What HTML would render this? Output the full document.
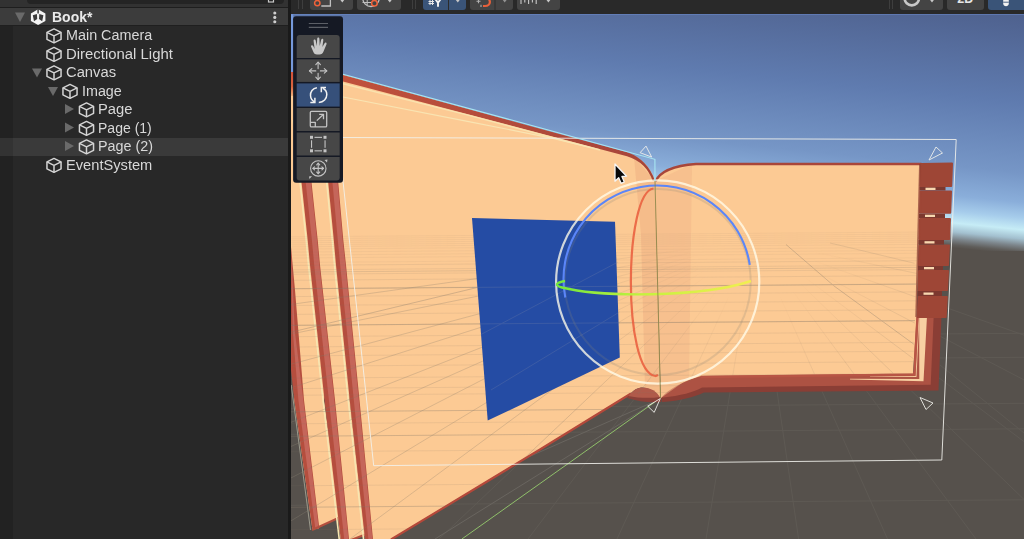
<!DOCTYPE html>
<html>
<head>
<meta charset="utf-8">
<title>Unity - Book</title>
<style>
html,body{margin:0;padding:0;background:#282828;}
body{width:1024px;height:539px;overflow:hidden;position:relative;font-family:"Liberation Sans",sans-serif;}
#hier{position:absolute;left:0;top:0;width:288px;height:539px;background:#282828;overflow:hidden;}
#hier .strip{position:absolute;left:0;top:26px;width:13px;height:513px;background:#222222;}
#hier .topbar{position:absolute;left:0;top:0;width:288px;height:8px;background:#323232;}
#hier .search{position:absolute;left:27px;top:-10px;width:257px;height:13.5px;background:#242424;border-radius:4px;}
#hier .head{position:absolute;left:0;top:7px;width:288px;height:17px;background:#3c3c3c;border-top:1px solid #1e1e1e;border-bottom:1px solid #1f1f1f;box-sizing:content-box;}
#hier .sel{position:absolute;left:0;top:138px;width:288px;height:18px;background:#3a3a3a;}
#hier .sel2{position:absolute;left:0;top:138px;width:13px;height:18px;background:#333333;}
.row{position:absolute;height:18px;line-height:18px;color:#d8d8d8;font-size:13.8px;white-space:nowrap;transform-origin:0 50%;}
.row.b{font-weight:bold;color:#eaeaea;}
svg{position:absolute;left:0;top:0;}
#divider{position:absolute;left:288px;top:0;width:3px;height:539px;background:#1a1a1a;}
#toolbar{position:absolute;left:291px;top:0;width:733px;height:14px;background:#292929;}
.tb{position:absolute;top:-6px;height:16px;background:#444444;border-radius:3px;}
.tb.blue{background:#3a5478;}
.sep{position:absolute;top:0;width:1px;height:9px;background:#3e3e3e;}
</style>
</head>
<body>
<div id="hier">
  <div class="topbar"></div>
  <div class="search"></div>
  <div class="head"></div>
  <div class="strip"></div>
  <div class="sel"></div><div class="sel2"></div>
  <div class="row b" id="t0" style="left:51.5px;top:9px;transform:scaleX(1.013);">Book*</div>
  <div class="row" id="t1" style="left:65.7px;top:27px;transform:scaleX(1.041);">Main Camera</div>
  <div class="row" id="t2" style="left:65.7px;top:45.5px;transform:scaleX(1.08);">Directional Light</div>
  <div class="row" id="t3" style="left:65.7px;top:64px;transform:scaleX(1.07);">Canvas</div>
  <div class="row" id="t4" style="left:81.8px;top:82.5px;transform:scaleX(1.038);">Image</div>
  <div class="row" id="t5" style="left:98.3px;top:101px;transform:scaleX(1.07);">Page</div>
  <div class="row" id="t6" style="left:98.3px;top:119.5px;transform:scaleX(1.016);">Page (1)</div>
  <div class="row" id="t7" style="left:98.3px;top:138px;transform:scaleX(1.041);">Page (2)</div>
  <div class="row" id="t8" style="left:65.7px;top:156.5px;transform:scaleX(1.062);">EventSystem</div>
</div>
<div id="divider"></div>
<div id="toolbar">
  <div class="sep" style="left:7px"></div><div class="sep" style="left:10.5px"></div>
  <div class="tb" style="left:18.5px;width:43.5px"></div>
  <div class="tb" style="left:65.5px;width:44.5px"></div>
  <div class="sep" style="left:120.5px"></div><div class="sep" style="left:124px"></div>
  <div class="tb blue" style="left:132px;width:42.5px"></div>
  <div class="tb" style="left:179px;width:42.5px"></div>
  <div class="tb" style="left:225.5px;width:43px"></div>
  <div class="sep" style="left:598px"></div><div class="sep" style="left:601px"></div>
  <div class="tb" style="left:608.5px;width:43.5px"></div>
  <div class="tb" style="left:656px;width:36.5px"></div>
  <div class="tb blue" style="left:696.5px;width:40px"></div>
</div>
<svg id="scene" width="1024" height="539" viewBox="0 0 1024 539">
<defs>
<linearGradient id="sky" x1="994" y1="14" x2="970.300" y2="249.600" gradientUnits="userSpaceOnUse">
<stop offset="0" stop-color="#4f628f"/>
<stop offset="0.36" stop-color="#5f7baf"/>
<stop offset="0.655" stop-color="#7696c6"/>
<stop offset="0.78" stop-color="#8aaeda"/>
<stop offset="0.845" stop-color="#a6cceb"/>
<stop offset="0.895" stop-color="#c6ecf6"/>
<stop offset="0.933" stop-color="#a3c0cf"/>
<stop offset="0.962" stop-color="#7d868c"/>
<stop offset="0.987" stop-color="#5f5d5a"/>
<stop offset="1" stop-color="#56514c"/>
</linearGradient>
<linearGradient id="ygrad" x1="556" y1="0" x2="751" y2="0" gradientUnits="userSpaceOnUse">
<stop offset="0" stop-color="#6fe63c"/>
<stop offset="0.45" stop-color="#c6f23e"/>
<stop offset="1" stop-color="#f2ee52"/>
</linearGradient>
<clipPath id="clipscene"><rect x="291" y="14" width="733" height="525"/></clipPath>
<clipPath id="clippages"><path d="M291,60 L540,129 L628,153 Q648,160 655,181 L660.500,398.500 L631,393 L391,539 L291,539 Z M655,181 Q662,166 696,163.500 L921,163.500 L913,373 L701,376 L661,398 Z"/></clipPath>
<linearGradient id="topred" x1="343" y1="0" x2="655" y2="0" gradientUnits="userSpaceOnUse"><stop offset="0" stop-color="#c0513c"/><stop offset="0.6" stop-color="#b04a3b"/><stop offset="1" stop-color="#a6453a"/></linearGradient>
<radialGradient id="fadeg" cx="755" cy="240" r="330" gradientUnits="userSpaceOnUse"><stop offset="0" stop-color="#000"/><stop offset="0.18" stop-color="#000"/><stop offset="0.75" stop-color="#fff"/><stop offset="1" stop-color="#fff"/></radialGradient>
<mask id="fade" maskUnits="userSpaceOnUse" x="291" y="14" width="733" height="525"><rect x="291" y="14" width="733" height="525" fill="url(#fadeg)"/></mask>
<linearGradient id="stripred" x1="0" y1="72" x2="0" y2="96" gradientUnits="userSpaceOnUse"><stop offset="0" stop-color="#d2503a"/><stop offset="0.6" stop-color="#d8643f"/><stop offset="1" stop-color="#f0b07c"/></linearGradient>
</defs>
<g clip-path="url(#clipscene)">
<rect x="291" y="14" width="733" height="238" fill="url(#sky)"/>
<rect x="291" y="251" width="733" height="288" fill="#56514c"/>
<!-- ground grid -->
<g stroke="#6a665f" stroke-width="1" fill="none" opacity="0.4">
<path d="M291,408.8 L1024,403.3"/>
<path d="M291,434.3 L1024,428.8"/>
<path d="M291,505.3 L1024,499.8"/>
<path d="M291,362.8 L1024,357.3"/>
<path d="M291,338.8 L1024,333.3"/>
<path d="M745.2,300.0 L706.0,539"/>
<path d="M763.7,300.0 L798.6,539"/>
<path d="M781.6,300.0 L887.5,539"/>
<path d="M799.3,300.0 L976.0,539"/>
<path d="M817.2,300.0 L1065.0,539"/>
<path d="M835.1,300.0 L1154.0,539"/>
<path d="M870.4,300.0 L1330.0,539"/>
<path d="M924.6,300.0 L1600.0,539"/>
<path d="M727.3,300.0 L617.0,539"/>
<path d="M709.4,300.0 L528.0,539"/>
<path d="M691.6,300.0 L439.0,539"/>
<path d="M673.7,300.0 L350.0,539"/>
<path d="M655.9,300.0 L261.0,539"/>
<path d="M638.0,300.0 L172.0,539"/>
<path d="M620.2,300.0 L83.0,539"/>
<path d="M602.3,300.0 L-6.0,539"/>
<path d="M566.6,300.0 L-184.0,539"/>
<path d="M530.9,300.0 L-362.0,539"/>
<path d="M459.0,300.0 L-720.0,539"/>
<path d="M940,365 L1024,433"/><path d="M660,399 L435,539" stroke="#85827b"/><path d="M660,399 L517,462" stroke="#85827b"/>
</g>
<path d="M461.900,539 L659.500,398.700" stroke="#8fbf6a" stroke-width="1" fill="none"/>

<!-- right side: cover, layers -->
<path d="M661,398 C666,390 684,381 701,375.500 L916,372 L916,316 L941.500,316 L938.500,390.600 L704,392.500 C694,397 680,401 662,402 Z" fill="#8a3e35"/>
<path d="M661,397 C666,390 684,381 701,375.500 L914,372 L914,316 L933.700,316 L930.700,384.800 L702,387.500 C694,392 680,396 663,397.500 Z" fill="#ad5243"/>
<path d="M919.200,316 L927,316 L923.500,381.300 L850,379.400 L850,378.700 L919.300,379 Z" fill="#f8d0a2"/>
<path d="M918.400,316 L919.500,316 L916.500,377 L870,376.500 L870,376 L915.400,376 Z" fill="#f3c69a"/>
<!-- right page -->
<path d="M655,181 Q662,166 696,163.500 L921,163.500 L916.500,318 L913,373.500 L701,376 C684,381 668,389 661,398 Z" fill="#fcca94"/>
<path d="M655,181 L692,164 L689,378 L661,398 Z" fill="#f2b888" opacity="0.55"/>
<path d="M655.500,181.500 Q662,166.500 696,164 L921.500,164" fill="none" stroke="#a8463a" stroke-width="2.500"/>
<path d="M917.500,317 L914.400,374.600 L701,377" fill="none" stroke="#b85545" stroke-width="2.400"/>
<!-- tabs -->
<g fill="#9e4636" stroke="#9e4636" stroke-width="2" stroke-linejoin="round">
<path d="M921,164 L952,163.500 L951.200,186 L920.500,186 Z"/>
<path d="M920.500,191.500 L951,191.500 L950.200,212.700 L920,212.700 Z"/>
<path d="M920,219 L950,219 L949.200,239 L919.500,239 Z"/>
<path d="M919.500,245.500 L949,245.500 L948,265 L919,265 Z"/>
<path d="M919,271 L948,271 L947,290 L918.500,290 Z"/>
<path d="M918.500,297 L946.800,297 L945.700,317 L917.700,317 Z"/>
</g>
<g fill="#7c382f">
<rect x="919.500" y="187" width="26" height="3.500"/><rect x="919" y="213.700" width="26" height="4.300"/><rect x="918.500" y="240" width="25.500" height="4.500"/><rect x="918" y="266" width="25" height="4"/><rect x="917.500" y="291" width="24.500" height="5"/>
</g>
<g fill="#f8d8b0">
<rect x="925.500" y="187.700" width="10" height="2.300"/><rect x="925" y="214.700" width="10" height="2.300"/><rect x="924.500" y="241.200" width="10" height="2.300"/><rect x="924" y="267" width="10" height="2.300"/><rect x="923.500" y="292.500" width="10" height="2.300"/>
</g>
<path d="M919.800,164 L916,317" stroke="#8a3c30" stroke-width="1.500" fill="none" opacity="0.7"/>

<!-- left pages -->
<!-- page 0 (far left) -->
<path d="M291,90 L343,90 L343,183 L324,400 L340,517 L312.500,530 L294.300,400 L291,340 Z" fill="#fcca94"/>
<path d="M291.0,247.0 L291.0,370.0 L294.3,400.0 L312.5,530.0 L319.3,528.0 L304.0,400.0 L295.0,290.0 L291.0,247.0 Z" fill="#b54e3e"/><path d="M291.0,247.0 L292.7,330.0 L298.4,400.0 L315.4,529.0 L318.8,529.0 L303.3,400.0 L294.7,330.0 L291.0,247.0 Z" fill="#c5665a"/><path d="M291.2,385 L293.200,400 L310.500,530" stroke="#b9b9a8" stroke-width="1" fill="none" opacity="0.7"/>
<path d="M312,530 L339.500,517.500" stroke="#b4503f" stroke-width="2.200" fill="none"/>
<!-- page 1 -->
<path d="M295,90 L343,90 L343,183 L349.700,400 L365,535.500 L341,543.500 L325,400 L310,265 L302,183 Z" fill="#fcca94"/>
<path d="M294.8,120.0 L301.6,183.0 L307.7,240.0 L310.0,265.0 L324.5,400.0 L340.7,539.0 L349.0,539.0 L335.0,400.0 L320.0,265.0 L317.7,240.0 L311.6,183.0 L304.8,120.0 Z" fill="#b54e3e"/><path d="M299.0,120.0 L305.8,183.0 L311.9,240.0 L314.2,265.0 L328.9,400.0 L344.2,539.0 L348.4,539.0 L334.3,400.0 L319.3,265.0 L317.0,240.0 L310.9,183.0 L304.1,120.0 Z" fill="#c5665a"/><path d="M293.3,120.0 L300.1,183.0 L306.2,240.0 L308.5,265.0 L323.0,400.0 L339.2,539.0" stroke="#f7e6b2" stroke-width="1.600" fill="none"/>

<path d="M345,542.300 L366,534.300" stroke="#b4503f" stroke-width="2.200" fill="none"/>
<!-- main page -->
<path d="M291,72 L293.800,72 L293.800,61.500 L343,75 L540,129 L628,153 Q648,160 655,181 L660.500,398.500 C656,391 648,387 641,387.500 C637,388 634,390 631,393 L540,449 L391,539 L365,539 L349.700,400 L336,265 L328.500,183 L322,110 Z" fill="#fcca94"/>
<path d="M634,157 L655,181 L660.500,398 L645,388 L641,235 Z" fill="#f0b384" opacity="0.6"/>
<!-- main page left border -->
<path d="M322.2,120.0 L328.3,183.0 L333.8,240.0 L336.0,265.0 L349.7,400.0 L365.0,539.0 L373.0,539.0 L359.5,400.0 L346.0,265.0 L343.3,240.0 L338.3,183.0 L332.2,120.0 Z" fill="#b54e3e"/><path d="M326.4,120.0 L332.5,183.0 L337.8,240.0 L340.2,265.0 L353.8,400.0 L368.4,539.0 L372.4,539.0 L358.8,400.0 L345.3,265.0 L342.6,240.0 L337.6,183.0 L331.5,120.0 Z" fill="#c5665a"/><path d="M320.7,120.0 L326.8,183.0 L332.3,240.0 L334.5,265.0 L348.2,400.0 L363.5,539.0" stroke="#f7e6b2" stroke-width="1.600" fill="none"/>

<!-- main page top border -->
<path d="M291,72 L294,72 L294,96 L291,96 Z" fill="url(#stripred)"/>
<path d="M343,75 L540,128.700 L628,152.500 Q648,160 655,181 L652.600,181 Q646.500,162.500 627,156.300 L540,133.200 L343,81.500 Z" fill="url(#topred)"/>
<path d="M343,83.800 L470,115.600 L540,134.300 L600,150" stroke="#f9e2ae" stroke-width="1.400" fill="none"/>
<path d="M343,97 L470,121.800 L553,138.300 L590,147.500" stroke="#f9e4b2" stroke-width="1.200" fill="none"/>
<!-- main page bottom border -->
<path d="M391,539.500 L540,449.500 L631,393.500" stroke="#b4483a" stroke-width="2.200" fill="none"/>
<!-- spine lobes -->
<path d="M631,393 C634,390 637,388 641,387.500 C650,387 657,391 660.500,398.500 C650,402 638,400 628,397 Z" fill="#b05a4a"/>
<path d="M628,396 C638,398 650,398.500 660.500,397 L661,402 C650,403 638,401.500 627,398 Z" fill="#8a4038"/>



<!-- grid overlay on pages -->
<g clip-path="url(#clippages)" stroke="#85796a" fill="none">
<g stroke-width="1" opacity="0.34">
<path d="M291,288.8 L1024,283.3"/>
<path d="M291,325.3 L1024,319.8"/>
<path d="M291,411.8 L1024,406.3"/>
<path d="M291,436.3 L1024,430.8"/>
<path d="M291,507.3 L1024,501.8"/>
<g opacity="0.6"><path d="M291,272.1 L1024,266.6"/></g>
<path d="M291,332.2 L476,287.8 L565,266.4"/>
<path d="M786,244.5 L800,256.6 L833.8,285.8 L913.3,343.8 L950,372"/>
<path d="M830,243 L854,248.7 L914.6,263.3" opacity="0.5"/>
</g>
<g stroke-width="0.900" opacity="0.3" mask="url(#fade)">
<path d="M775.3,285.7 L887.5,539"/>
<path d="M784.7,280.2 L976.0,539"/>
<path d="M791.0,274.7 L1065.0,539"/>
<path d="M795.0,270.0 L1154.0,539"/>
<path d="M799.4,263.1 L1330.0,539"/>
<path d="M802.1,256.7 L1600.0,539"/>
<path d="M804.0,250.1 L2200.0,539"/>
<path d="M746.9,289.3 L706.0,539"/>
<path d="M734.0,285.4 L617.0,539"/>
<path d="M724.8,279.8 L528.0,539"/>
<path d="M718.7,274.4 L439.0,539"/>
<path d="M714.8,269.7 L350.0,539"/>
<path d="M712.2,265.9 L261.0,539"/>
<path d="M710.5,262.8 L172.0,539"/>
<path d="M709.3,260.3 L83.0,539"/>
<path d="M708.5,258.3 L-6.0,539"/>
<path d="M707.4,255.2 L-184.0,539"/>
<path d="M706.7,252.9 L-362.0,539"/>
<path d="M706.0,249.9 L-720.0,539"/>
<path d="M705.5,246.9 L-1400.0,539"/>
</g>
<g stroke-width="0.800" opacity="0.16">
<g opacity="0.55"><path d="M291,236.8 L1024,231.3"/>
<path d="M291,238.8 L1024,233.3"/>
<path d="M291,240.8 L1024,235.3"/>
<path d="M291,242.8 L1024,237.3"/>
<path d="M291,244.8 L1024,239.3"/>
<path d="M291,246.8 L1024,241.3"/>
<path d="M291,249.1 L1024,243.6"/>
<path d="M291,252.1 L1024,246.6"/>
<path d="M291,255.1 L1024,249.6"/>
<path d="M291,258.0 L1024,252.5"/>
<path d="M291,262.5 L1024,257.0"/></g>
<path d="M291,265.4 L1024,259.9"/>
<path d="M291,269.9 L1024,264.4"/>
<path d="M291,274.3 L1024,268.8"/>
<path d="M291,280.3 L1024,274.8"/>
<path d="M291,288.6 L1024,283.1"/>
<path d="M291,296.6 L1024,291.1"/>
<path d="M291,305.5 L1024,300.0"/>
<path d="M291,314.4 L1024,308.9"/>
<path d="M291,325.4 L1024,319.9"/>
<path d="M291,336.7 L1024,331.2"/>
<path d="M291,347.0 L1024,341.5"/>
<path d="M291,355.9 L1024,350.4"/>
<path d="M291,366.3 L1024,360.8"/>
<path d="M291,378.2 L1024,372.7"/>
<path d="M291,388.6 L1024,383.1"/>
<path d="M291,395.3 L1024,389.8"/>
<path d="M291,423.8 L1024,418.3"/>
<path d="M291,451.8 L1024,446.3"/>
<path d="M291,485.8 L1024,480.3"/>
<path d="M291,529.8 L1024,524.3"/>
</g>
</g>

<!-- blue quad -->
<path d="M472,218 L615,221.700 L619.800,357.500 L487.700,420.600 Z" fill="#254ca4"/>
<g stroke="#8a90a8" stroke-width="1" fill="none" opacity="0.22"><path d="M472,287.400 L620,286.300"/><path d="M479,323.900 L620,322.800"/><path d="M491,390 L619.500,312"/><path d="M480,335 L618,262"/></g>
<!-- gizmo -->
<circle cx="657.700" cy="282" r="93" fill="none" stroke="#8a8378" stroke-width="2" opacity="0.22"/>
<circle cx="657.700" cy="282" r="101.600" fill="none" stroke="#fffceb" stroke-width="2.200" opacity="0.78"/>
<path d="M653.500,188.500 C624,192 622,372 655.500,376 L658,375" fill="none" stroke="#ea6240" stroke-width="2.200" opacity="0.9"/>
<path d="M565.300,297.500 A93.700,93.700 0 1 1 749.800,264.900" fill="none" stroke="#5b86f8" stroke-width="2.100"/>
<path d="M565,281 C556,282.500 554,285.500 562,287.500 C600,297 700,298 751,281" fill="none" stroke="url(#ygrad)" stroke-width="2.400"/>
<path d="M655,181 L660.500,398.500" stroke="#8d8648" stroke-width="1" fill="none" opacity="0.85"/>

<!-- rect transform -->
<g fill="none" stroke="#f1f1ec" stroke-width="1" opacity="0.88">
<path d="M338.300,137.500 L956.200,139.500 L941.800,460 L373.700,465.700 Z"/>
<path d="M646,146.100 L640.100,152.700 L651.700,157.100 Z"/>
<path d="M929,160 L936,147 L942.500,153 Z"/>
<path d="M920,397.500 L933,403 L926,409.500 Z"/>
<path d="M660.300,398.500 L647.700,406.100 L654.200,412.400 Z"/>
</g>
<path d="M343,74.300 L540,127.700 L654.900,159.300 L655,181" stroke="#a8e6f2" stroke-width="1.100" fill="none"/>

<rect x="291" y="14" width="2.200" height="58" fill="#7699dc"/>
<rect x="291" y="14" width="733" height="0.800" fill="#6f8fd0" opacity="0.6"/>
<!-- cursor -->
<path d="M615,164 L615,181.200 L618.700,177.700 L621.100,183.300 L624.300,182 L621.900,176.500 L626.600,176.200 Z" fill="#080808" stroke="#f6f6f6" stroke-width="1.300" stroke-linejoin="round"/>
</g>
</svg>

<svg id="icons" width="1024" height="539" viewBox="0 0 1024 539">
<defs>
<g id="cube" fill="none" stroke="#d4d4d4" stroke-width="1.500" stroke-linejoin="round">
<path d="M8,1.650 L15.050,5.150 L15.050,12.050 L8,15.550 L0.950,12.050 L0.950,5.150 Z"/>
<path d="M0.950,5.150 L8,8.600 L15.050,5.150 M8,8.600 L8,15.550"/>
</g>
</defs>
<!-- tool panel -->
<rect x="293.100" y="16.200" width="49.900" height="166.500" rx="3" fill="#151924"/>
<path d="M308.800,23.500 H328 M308.800,27.300 H328" stroke="#5c5f66" stroke-width="1.200"/>
<path d="M296.700,38 a3,3 0 0 1 3,-3 h37 a3,3 0 0 1 3,3 v20 h-43 Z" fill="#474747"/>
<rect x="296.700" y="59.300" width="43" height="22.600" fill="#474747"/>
<rect x="296.700" y="83.400" width="43" height="23.200" fill="#36507a"/>
<rect x="296.700" y="108" width="43" height="23" fill="#474747"/>
<rect x="296.700" y="132.500" width="43" height="23" fill="#474747"/>
<path d="M296.700,157 h43 v20.400 a3,3 0 0 1 -3,3 h-37 a3,3 0 0 1 -3,-3 Z" fill="#474747"/>
<!-- hand -->
<g fill="#c8c8c8">
<path d="M311,46.500 C311,45 312.600,44.800 313.200,46 L314.600,49 L313.600,41 C313.400,39.400 315.400,39.100 315.700,40.600 L316.800,46 L317.200,38.700 C317.300,37.200 319.300,37.200 319.400,38.700 L319.700,46 L321.200,39.800 C321.600,38.300 323.500,38.700 323.300,40.200 L322.400,47 L324.600,43.200 C325.400,42 327,42.800 326.500,44.200 L323.500,51.500 C322.800,53.500 321.500,54.500 319.500,54.500 L317,54.500 C315.300,54.500 314.200,53.700 313.500,52.300 Z"/>
</g>
<!-- move -->
<g fill="none" stroke="#c4c4c4" stroke-width="1.100" stroke-linecap="round" stroke-linejoin="round">
<path d="M318.100,62.300 V68.600 M318.100,73.200 V79.500 M309.500,70.900 H315.800 M320.400,70.900 H326.700"/>
<path d="M315.800,64.700 L318.100,62.200 L320.400,64.700 M315.800,77.100 L318.100,79.600 L320.400,77.100 M311.900,68.600 L309.400,70.900 L311.900,73.200 M324.300,68.600 L326.800,70.900 L324.300,73.200"/>
</g>
<!-- rotate -->
<g fill="none" stroke="#f2f2f2" stroke-width="1.500" stroke-linecap="butt" stroke-linejoin="miter">
<path d="M316.900,87.800 C312.500,88.300 310.300,92 310.500,95.500 C310.700,98.700 312.300,100.800 314.600,102"/>
<path d="M310.300,102.500 H314.900 V97.800"/>
<path d="M318.800,102.500 C323.600,102.300 326.800,98.800 326.800,94.500 C326.800,91.700 325.300,89.300 322.800,88.200"/>
<path d="M326,87.600 H321.300 V92.200"/>
</g>
<!-- scale -->
<g fill="none" stroke="#c4c4c4" stroke-width="1.300" stroke-linejoin="round">
<rect x="310.300" y="111.400" width="16.400" height="15.500" rx="1.200"/>
<path d="M310.300,122.300 H315.300 V126.900"/>
<path d="M316.800,120.600 L323.300,114.500 M319.200,114.300 H323.500 V119.200"/>
</g>
<!-- rect tool -->
<g fill="#c4c4c4">
<rect x="310" y="135.800" width="3" height="3"/><rect x="323.500" y="135.800" width="3" height="3"/><rect x="310" y="149.300" width="3" height="3"/><rect x="323.500" y="149.300" width="3" height="3"/>
<rect x="314.500" y="136.800" width="7.500" height="1.100"/><rect x="314.500" y="150.300" width="7.500" height="1.100"/><rect x="311" y="140.300" width="1.100" height="7.500"/><rect x="324.500" y="140.300" width="1.100" height="7.500"/>
</g>
<!-- transform -->
<g fill="none" stroke="#c4c4c4" stroke-width="1.100" stroke-linecap="round" stroke-linejoin="round">
<path d="M313,162.800 A7.600,7.600 0 0 1 323.500,162.800 M313,174 A7.600,7.600 0 0 0 323.500,174 M312.700,163.200 A7.600,7.600 0 0 0 312.700,173.700 M323.900,163.200 A7.600,7.600 0 0 1 323.900,173.700"/>
<path d="M318.200,163.300 V173.600 M313,168.400 H323.500"/>
<path d="M316.700,164.800 L318.200,163.200 L319.700,164.800 M316.700,172 L318.200,173.600 L319.700,172 M314.500,166.900 L312.900,168.400 L314.500,169.900 M321.900,166.900 L323.500,168.400 L321.900,169.900"/>
</g>
<path d="M324.500,160 L327.500,159.500 L327,162.500 Z M309,176.500 L312,176 L309.500,179 Z" fill="#c4c4c4"/>

<!-- hierarchy icons -->
<g fill="#6a6a6a">
<path d="M15,12.500 L25,12.500 L20,22 Z"/>
<path d="M32,68.500 L42,68.500 L37,77.500 Z"/>
<path d="M48,87 L58,87 L53,96 Z"/>
<path d="M65,104 L74,109 L65,114 Z"/>
<path d="M65,122.500 L74,127.500 L65,132.500 Z"/>
<path d="M65,141 L74,146 L65,151 Z"/>
</g>
<use href="#cube" x="46" y="27.300"/>
<use href="#cube" x="46" y="45.800"/>
<use href="#cube" x="46" y="64.300"/>
<use href="#cube" x="62" y="82.800"/>
<use href="#cube" x="78.500" y="101.300"/>
<use href="#cube" x="78.500" y="119.800"/>
<use href="#cube" x="78.500" y="138.300"/>
<use href="#cube" x="46" y="156.800"/>
<!-- unity logo -->
<g>
<path d="M38.100,9.300 L45.400,13.500 L45.400,21 L38.100,25 L30.900,21 L30.900,13.500 Z" fill="#f4f4f4"/>
<path d="M32.800,15.300 L36.900,14 L37.200,19 L34,21.300 Z M43.400,15.300 L39.300,14 L39,19 L42.200,21.300 Z" fill="#3a3a3a"/>
<path d="M38.100,9 V13.600" stroke="#3a3a3a" stroke-width="1.500" fill="none"/>
</g>
<!-- kebab -->
<g fill="#d0d0d0"><circle cx="274.800" cy="13" r="1.550"/><circle cx="274.800" cy="17.400" r="1.550"/><circle cx="274.800" cy="21.800" r="1.550"/></g>
<!-- search icon remnant -->
<rect x="268.500" y="-1" width="5" height="3" fill="none" stroke="#c8c8c8" stroke-width="1.200"/>

<!-- toolbar icons -->
<g fill="none" stroke-width="1.500">
<circle cx="317.300" cy="3.100" r="2.700" stroke="#f0623a"/>
<path d="M321.300,6 H330.400 V-1" stroke="#c0c0c0" stroke-width="1.300"/>
<circle cx="371" cy="-1.700" r="8.200" stroke="#c0c0c0" stroke-width="1.300"/>
<path d="M367.200,-6 V5 M362.500,2.500 H374" stroke="#c0c0c0" stroke-width="1"/>
<circle cx="374.400" cy="3.200" r="2.800" stroke="#f0623a" fill="#444"/>
</g>
<g fill="#c8c8c8">
<path d="M340,-0.500 L344.600,-0.500 L342.300,2.400 Z"/>
<path d="M387.500,-0.500 L392.100,-0.500 L389.800,2.400 Z"/>
<path d="M455.500,-0.500 L460.100,-0.500 L457.800,2.400 Z"/>
<path d="M502.400,-0.500 L507,-0.500 L504.700,2.400 Z" opacity="0.6"/>
<path d="M546.100,-0.500 L550.700,-0.500 L548.400,2.400 Z"/>
<path d="M929.700,-0.500 L934.300,-0.500 L932,2.400 Z"/>
</g>
<path d="M448.500,0 V10 M495,0 V10" stroke="#2c2c2c" stroke-width="1"/>
<!-- Y icon -->
<path d="M434.200,-2.500 L438,2.800 L438,6.800 M441.800,-2.500 L438,2.800" stroke="#f4f4f4" stroke-width="1.900" fill="none"/>
<path d="M428.500,1.500 H434 M430,-1 V5 M432.500,-1 V5 M428.500,3.500 H434" stroke="#e8e8e8" stroke-width="1" fill="none"/>
<!-- magnet -->
<path d="M485,-2 C491.500,-2 491.500,6 485,6 L483,6" stroke="#e8603a" stroke-width="2.200" fill="none"/>
<path d="M476.500,1.200 H480.500 M478.500,-1 V3.200 M481,4.800 V7" stroke="#b0b0b0" stroke-width="1.100" fill="none"/>
<!-- ruler -->
<path d="M521,-2 V4 M524.800,-2 V2.500 M528.600,-2 V4 M532.400,-2 V2.500 M536.200,-2 V4" stroke="#c8c8c8" stroke-width="1.100" fill="none"/>
<!-- shading circle -->
<circle cx="911.800" cy="-1.800" r="7.200" fill="none" stroke="#c8c8c8" stroke-width="2.600"/>
<!-- bulb -->
<path d="M1003.200,-1 H1008.800 V3.500 C1008.800,7.200 1003.200,7.200 1003.200,3.500 Z" fill="#f2f2f2"/>
<path d="M1003.200,2.200 H1008.800" stroke="#3a5478" stroke-width="0.900"/>
<text x="965.200" y="3.400" text-anchor="middle" font-family="Liberation Sans, sans-serif" font-weight="bold" font-size="12.500" fill="#e6e6e6">2D</text>
</svg>

</body>
</html>
